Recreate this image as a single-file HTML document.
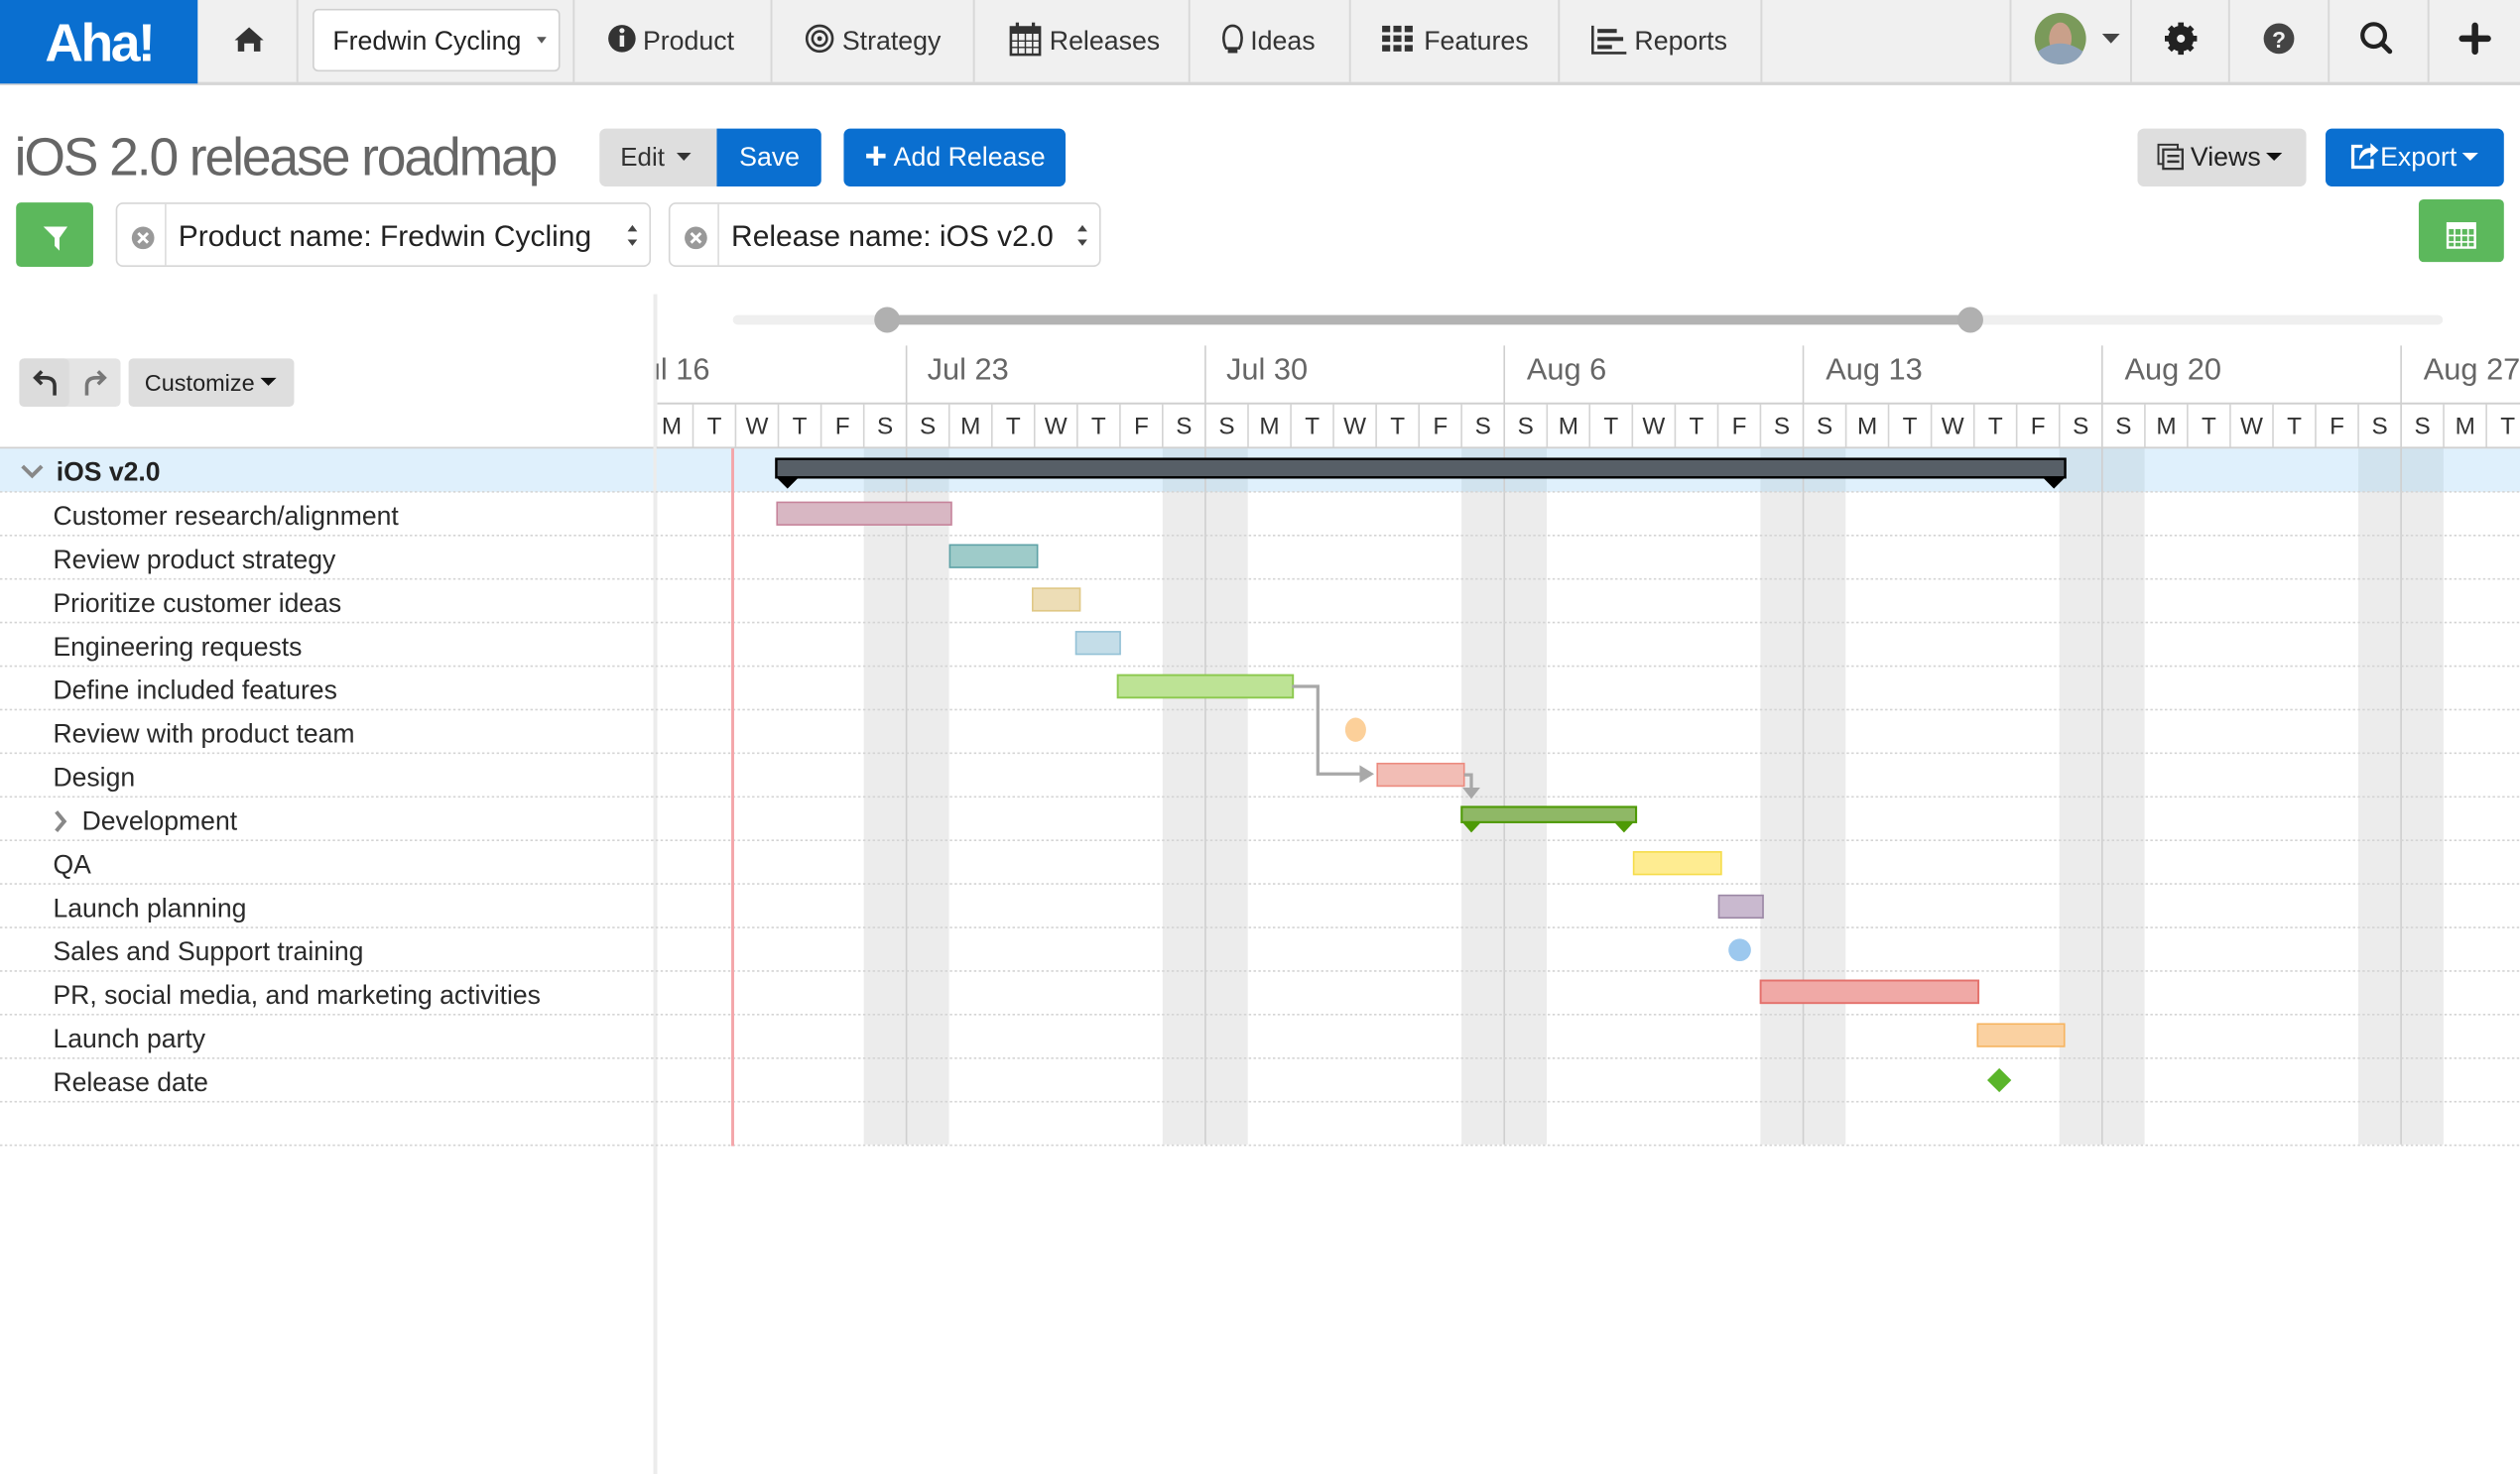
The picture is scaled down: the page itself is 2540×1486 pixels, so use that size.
<!DOCTYPE html>
<html><head><meta charset="utf-8"><style>
html,body{margin:0;padding:0;background:#fff;overflow:hidden}
svg{display:block}
text{font-family:"Liberation Sans",Arial,sans-serif}
</style></head><body>
<svg width="2540" height="1486" viewBox="0 0 1568 917" preserveAspectRatio="none" xmlns="http://www.w3.org/2000/svg">
<rect x="0" y="0" width="1568" height="52" fill="#f0f0f0"/>
<rect x="0" y="51" width="1568" height="2" fill="#d6d6d6"/>
<rect x="0" y="0" width="123" height="52" fill="#0a6fd0"/>
<text x="28" y="38" font-size="33" font-weight="bold" fill="#fff" letter-spacing="-1.5">Aha!</text>
<g stroke="#d8d8d8" stroke-width="1.2">
<line x1="185" y1="0" x2="185" y2="51"/><line x1="357" y1="0" x2="357" y2="51"/><line x1="480" y1="0" x2="480" y2="51"/><line x1="606" y1="0" x2="606" y2="51"/><line x1="740" y1="0" x2="740" y2="51"/><line x1="840" y1="0" x2="840" y2="51"/><line x1="970" y1="0" x2="970" y2="51"/><line x1="1096" y1="0" x2="1096" y2="51"/><line x1="1251" y1="0" x2="1251" y2="51"/><line x1="1326" y1="0" x2="1326" y2="51"/><line x1="1387" y1="0" x2="1387" y2="51"/><line x1="1449" y1="0" x2="1449" y2="51"/><line x1="1511" y1="0" x2="1511" y2="51"/>
</g>
<path d="M146 25 L155 17 L164 25 L162 25 L162 32 L158 32 L158 27 L152 27 L152 32 L148 32 L148 25 Z" fill="#333"/>
<rect x="195" y="6" width="153" height="38" rx="3" fill="#fff" stroke="#d0d0d0"/>
<text x="207" y="31" font-size="16.5" fill="#222">Fredwin Cycling</text>
<path d="M334 23 L340 23 L337 27 Z" fill="#555"/>
<circle cx="387" cy="24" r="8.5" fill="#333"/><rect x="385.6" y="22" width="2.8" height="7" fill="#f0f0f0"/><circle cx="387" cy="19" r="1.6" fill="#f0f0f0"/>
<text x="400" y="31" font-size="16.5" fill="#333">Product</text>
<circle cx="510" cy="24" r="8" fill="none" stroke="#333" stroke-width="1.6"/><circle cx="510" cy="24" r="4.5" fill="none" stroke="#333" stroke-width="1.6"/><circle cx="510" cy="24" r="1.5" fill="#333"/>
<text x="524" y="31" font-size="16.5" fill="#333">Strategy</text>
<rect x="629" y="17" width="18" height="17" fill="none" stroke="#333" stroke-width="1.6"/><rect x="629" y="17" width="18" height="4" fill="#333"/><path d="M629 25.5H647M629 29.5H647M633.5 21V34M638 21V34M642.5 21V34" stroke="#333" stroke-width="0.9"/><rect x="632" y="14" width="2" height="5" fill="#333"/><rect x="642" y="14" width="2" height="5" fill="#333"/>
<text x="653" y="31" font-size="16.5" fill="#333">Releases</text>
<path d="M763 30 C760 25 761 16 767 16 C773 16 774 25 771 30 Z" fill="none" stroke="#333" stroke-width="1.6"/><rect x="764" y="30" width="6" height="3" fill="#333"/>
<text x="778" y="31" font-size="16.5" fill="#333">Ideas</text>
<g fill="#333"><rect x="860" y="16" width="5" height="4"/><rect x="867" y="16" width="5" height="4"/><rect x="874" y="16" width="5" height="4"/><rect x="860" y="22" width="5" height="4"/><rect x="867" y="22" width="5" height="4"/><rect x="874" y="22" width="5" height="4"/><rect x="860" y="28" width="5" height="4"/><rect x="867" y="28" width="5" height="4"/><rect x="874" y="28" width="5" height="4"/></g>
<text x="886" y="31" font-size="16.5" fill="#333">Features</text>
<path d="M991 16V33H1012" fill="none" stroke="#333" stroke-width="1.6"/><rect x="994" y="18" width="12" height="2.5" fill="#333"/><rect x="994" y="23" width="16" height="2.5" fill="#333"/><rect x="994" y="28" width="9" height="2.5" fill="#333"/>
<text x="1017" y="31" font-size="16.5" fill="#333">Reports</text>
<circle cx="1282" cy="24" r="16" fill="#7a9a5a"/><ellipse cx="1282" cy="24" rx="7" ry="10" fill="#c9a08a"/><path d="M1268 32 Q1282 22 1296 32 Q1292 40 1282 40 Q1272 40 1268 32Z" fill="#8ea2b8"/>
<path d="M1308 21 L1319 21 L1313.5 27 Z" fill="#444"/>
<circle cx="1357" cy="24" r="6" fill="none" stroke="#222" stroke-width="4"/>
<g stroke="#222" stroke-width="3.5"><line x1="1357" y1="14" x2="1357" y2="34"/><line x1="1347" y1="24" x2="1367" y2="24"/><line x1="1350" y1="17" x2="1364" y2="31"/><line x1="1364" y1="17" x2="1350" y2="31"/></g><circle cx="1357" cy="24" r="2.5" fill="#f0f0f0"/>
<circle cx="1418" cy="24" r="9.5" fill="#444"/><text x="1418" y="29.5" font-size="14" font-weight="bold" fill="#f0f0f0" text-anchor="middle">?</text>
<circle cx="1477" cy="22" r="7" fill="none" stroke="#222" stroke-width="2.6"/><line x1="1482" y1="27" x2="1487" y2="32" stroke="#222" stroke-width="3" stroke-linecap="round"/>
<path d="M1540 16V32M1532 24H1548" stroke="#222" stroke-width="4" stroke-linecap="round"/>
<text x="9" y="109" font-size="33" fill="#666" letter-spacing="-1.3" style="font-weight:300">iOS 2.0 release roadmap</text>
<rect x="373" y="80" width="80" height="36" rx="4" fill="#dedede"/>
<text x="386" y="103" font-size="16" fill="#333">Edit</text><path d="M421 95 L430 95 L425.5 100Z" fill="#333"/>
<path d="M446 80 H507 a4 4 0 0 1 4 4 V112 a4 4 0 0 1 -4 4 H446Z" fill="#0a6fd0"/>
<text x="460" y="103" font-size="16.5" fill="#fff">Save</text>
<rect x="525" y="80" width="138" height="36" rx="4" fill="#0a6fd0"/>
<path d="M545 91V103M539 97H551" stroke="#fff" stroke-width="2.8"/>
<text x="556" y="103" font-size="16.5" fill="#fff">Add Release</text>
<rect x="1330" y="80" width="105" height="36" rx="4" fill="#dedede"/>
<rect x="1343" y="90" width="12" height="12" fill="none" stroke="#333" stroke-width="1.2"/><rect x="1346" y="93" width="12" height="12" fill="#dedede" stroke="#333" stroke-width="1.4"/><path d="M1348.5 97H1356M1348.5 100.5H1356" stroke="#333" stroke-width="1.5"/>
<text x="1363" y="103" font-size="16.5" fill="#222">Views</text><path d="M1410 95 L1420 95 L1415 100Z" fill="#111"/>
<rect x="1447" y="80" width="111" height="36" rx="4" fill="#0a6fd0"/>
<path d="M1470 91 H1464 V104 H1476 V99" fill="none" stroke="#fff" stroke-width="2"/><path d="M1468 100 Q1468 92 1475 92 V89 L1480 93.5 L1475 98 V95 Q1471 95 1468 100Z" fill="#fff"/>
<text x="1481" y="103" font-size="16.5" fill="#fff">Export</text><path d="M1532 95 L1542 95 L1537 100Z" fill="#fff"/>
<rect x="10" y="126" width="48" height="40" rx="3" fill="#5cb85c"/>
<path d="M27 141 H42 L37 148 V156 L34 153 V148 Z" fill="#fff"/>
<rect x="72.5" y="126.5" width="332" height="39" rx="4" fill="#fff" stroke="#d6d6d6"/>
<line x1="103" y1="127" x2="103" y2="165" stroke="#ddd"/>
<circle cx="89" cy="148" r="7" fill="#999"/><path d="M86 145L92 151M92 145L86 151" stroke="#fff" stroke-width="1.8"/>
<text x="111" y="153" font-size="18.5" fill="#222">Product name: Fredwin Cycling</text>
<path d="M390.5 144 L396.5 144 L393.5 140Z M390.5 149 L396.5 149 L393.5 153Z" fill="#444"/>
<rect x="416.5" y="126.5" width="268" height="39" rx="4" fill="#fff" stroke="#d6d6d6"/>
<line x1="447" y1="127" x2="447" y2="165" stroke="#ddd"/>
<circle cx="433" cy="148" r="7" fill="#999"/><path d="M430 145L436 151M436 145L430 151" stroke="#fff" stroke-width="1.8"/>
<text x="455" y="153" font-size="18.5" fill="#222">Release name: iOS v2.0</text>
<path d="M670.5 144 L676.5 144 L673.5 140Z M670.5 149 L676.5 149 L673.5 153Z" fill="#444"/>
<rect x="1505" y="124" width="53" height="39" rx="3" fill="#5cb85c"/>
<rect x="1523" y="139" width="17" height="15" fill="none" stroke="#fff" stroke-width="1.5"/><rect x="1523" y="139" width="17" height="3.5" fill="#fff"/><path d="M1523 146.5H1540M1523 150.5H1540M1527.3 142V154M1531.5 142V154M1535.7 142V154" stroke="#fff" stroke-width="1"/>
<rect x="407" y="183" width="2" height="734" fill="#eee"/>
<rect x="456" y="196" width="1064" height="6" rx="3" fill="#efefef"/>
<rect x="552" y="196" width="674" height="6" fill="#b3b3b3"/>
<circle cx="552" cy="199" r="8" fill="#b0b0b0"/><circle cx="1226" cy="199" r="8" fill="#b0b0b0"/>
<rect x="0" y="279" width="1568" height="27" fill="#dff0fc"/>
<g fill="#ececec">
<rect x="537.5" y="306" width="53" height="406"/><rect x="723.4" y="306" width="53" height="406"/><rect x="909.4" y="306" width="53" height="406"/><rect x="1095.4" y="306" width="53" height="406"/><rect x="1281.4" y="306" width="53" height="406"/><rect x="1467.4" y="306" width="53" height="406"/>
</g>
<g fill="#d1e3ee">
<rect x="537.5" y="279" width="53" height="27"/><rect x="723.4" y="279" width="53" height="27"/><rect x="909.4" y="279" width="53" height="27"/><rect x="1095.4" y="279" width="53" height="27"/><rect x="1281.4" y="279" width="53" height="27"/><rect x="1467.4" y="279" width="53" height="27"/>
</g>
<g stroke="#cfcfcf" stroke-width="1">
<line x1="564" y1="215" x2="564" y2="712"/><line x1="750" y1="215" x2="750" y2="712"/><line x1="936" y1="215" x2="936" y2="712"/><line x1="1122" y1="215" x2="1122" y2="712"/><line x1="1308" y1="215" x2="1308" y2="712"/><line x1="1494" y1="215" x2="1494" y2="712"/>
</g>
<g stroke="#d0d0d0" stroke-width="1.2">
<line x1="409" y1="251" x2="1568" y2="251"/>
<line x1="0" y1="278.5" x2="1568" y2="278.5"/>
</g>
<g stroke="#d4d4d4" stroke-width="1">
<path d="M431.2 251V278M457.7 251V278M484.3 251V278M510.9 251V278M537.5 251V278M590.6 251V278M617.2 251V278M643.7 251V278M670.3 251V278M696.9 251V278M723.4 251V278M776.6 251V278M803.2 251V278M829.7 251V278M856.3 251V278M882.9 251V278M909.4 251V278M962.6 251V278M989.1 251V278M1015.7 251V278M1042.3 251V278M1068.9 251V278M1095.4 251V278M1148.6 251V278M1175.1 251V278M1201.7 251V278M1228.3 251V278M1254.8 251V278M1281.4 251V278M1334.6 251V278M1361.1 251V278M1387.7 251V278M1414.3 251V278M1440.8 251V278M1467.4 251V278M1520.5 251V278M1547.1 251V278"/>
</g>
<g font-size="19" fill="#666" style="font-weight:300">
<text x="391" y="236">Jul 16</text><text x="577" y="236">Jul 23</text><text x="763" y="236">Jul 30</text><text x="950" y="236">Aug 6</text><text x="1136" y="236">Aug 13</text><text x="1322" y="236">Aug 20</text><text x="1508" y="236">Aug 27</text>
</g>
<rect x="0" y="183" width="407" height="95" fill="#fff"/>
<rect x="12" y="223" width="63" height="30" rx="3" fill="#e4e4e4"/><rect x="12" y="223" width="31" height="30" rx="3" fill="#dcdcdc"/>
<path d="M34 246 V240 Q34 235 28 235 H23 M26 231 L22 235 L26 239" fill="none" stroke="#333" stroke-width="2.2"/>
<path d="M54 246 V240 Q54 235 60 235 H64 M61 231 L65 235 L61 239" fill="none" stroke="#777" stroke-width="2.2"/>
<rect x="80" y="223" width="103" height="30" rx="3" fill="#dedede"/>
<text x="90" y="243" font-size="14.5" fill="#222">Customize</text><path d="M162 235 L172 235 L167 240Z" fill="#111"/>
<rect x="406.5" y="183" width="2" height="734" fill="#ececec"/>
<g font-size="15" fill="#333" text-anchor="middle">
<text x="417.9" y="270">M</text><text x="444.5" y="270">T</text><text x="471" y="270">W</text><text x="497.6" y="270">T</text><text x="524.2" y="270">F</text><text x="550.7" y="270">S</text><text x="577.3" y="270">S</text>
<text x="603.9" y="270">M</text><text x="630.5" y="270">T</text><text x="657" y="270">W</text><text x="683.6" y="270">T</text><text x="710.2" y="270">F</text><text x="736.7" y="270">S</text><text x="763.3" y="270">S</text>
<text x="789.9" y="270">M</text><text x="816.5" y="270">T</text><text x="843" y="270">W</text><text x="869.6" y="270">T</text><text x="896.2" y="270">F</text><text x="922.7" y="270">S</text><text x="949.3" y="270">S</text>
<text x="975.9" y="270">M</text><text x="1002.4" y="270">T</text><text x="1029" y="270">W</text><text x="1055.6" y="270">T</text><text x="1082.2" y="270">F</text><text x="1108.7" y="270">S</text><text x="1135.3" y="270">S</text>
<text x="1161.9" y="270">M</text><text x="1188.4" y="270">T</text><text x="1215" y="270">W</text><text x="1241.6" y="270">T</text><text x="1268.1" y="270">F</text><text x="1294.7" y="270">S</text><text x="1321.3" y="270">S</text>
<text x="1347.9" y="270">M</text><text x="1374.4" y="270">T</text><text x="1401" y="270">W</text><text x="1427.6" y="270">T</text><text x="1454.1" y="270">F</text><text x="1480.7" y="270">S</text><text x="1507.3" y="270">S</text>
<text x="1533.9" y="270">M</text><text x="1560.4" y="270">T</text>
</g>
<g stroke="#d4d4d4" stroke-width="1" stroke-dasharray="1.5 1.5">
<line x1="0" y1="306" x2="1568" y2="306"/><line x1="0" y1="333.1" x2="1568" y2="333.1"/><line x1="0" y1="360.2" x2="1568" y2="360.2"/><line x1="0" y1="387.3" x2="1568" y2="387.3"/><line x1="0" y1="414.4" x2="1568" y2="414.4"/><line x1="0" y1="441.5" x2="1568" y2="441.5"/><line x1="0" y1="468.6" x2="1568" y2="468.6"/><line x1="0" y1="495.7" x2="1568" y2="495.7"/><line x1="0" y1="522.8" x2="1568" y2="522.8"/><line x1="0" y1="549.9" x2="1568" y2="549.9"/><line x1="0" y1="577" x2="1568" y2="577"/><line x1="0" y1="604.1" x2="1568" y2="604.1"/><line x1="0" y1="631.2" x2="1568" y2="631.2"/><line x1="0" y1="658.3" x2="1568" y2="658.3"/><line x1="0" y1="685.4" x2="1568" y2="685.4"/><line x1="0" y1="712.5" x2="1568" y2="712.5"/>
</g>
<rect x="455" y="279" width="1.8" height="434" fill="#f4a6aa"/>
<path d="M14 290 L20 296 L26 290" fill="none" stroke="#888" stroke-width="2.4"/>
<text x="35" y="299" font-size="16.4" font-weight="bold" fill="#222">iOS v2.0</text>
<g font-size="16.4" fill="#2a2a2a">
<text x="33" y="326.5">Customer research/alignment</text>
<text x="33" y="353.6">Review product strategy</text>
<text x="33" y="380.7">Prioritize customer ideas</text>
<text x="33" y="407.8">Engineering requests</text>
<text x="33" y="434.9">Define included features</text>
<text x="33" y="462">Review with product team</text>
<text x="33" y="489.1">Design</text>
<text x="51" y="516.2">Development</text>
<text x="33" y="543.3">QA</text>
<text x="33" y="570.4">Launch planning</text>
<text x="33" y="597.5">Sales and Support training</text>
<text x="33" y="624.6">PR, social media, and marketing activities</text>
<text x="33" y="651.7">Launch party</text>
<text x="33" y="678.8">Release date</text>
</g>
<path d="M35 505 L40 511 L35 517" fill="none" stroke="#888" stroke-width="2.4"/>
<rect x="483" y="285.5" width="802" height="11.5" fill="#575f67" stroke="#000" stroke-width="1.5"/>
<path d="M483 297 L497 297 L490 304Z" fill="#000"/><path d="M1271 297 L1285 297 L1278 304Z" fill="#000"/>
<rect x="483.5" y="312.5" width="108.5" height="14" fill="#d8b7c3" stroke="#c6849b"/>
<rect x="591" y="339" width="54.5" height="14" fill="#9ecbc9" stroke="#5ea2a6"/>
<rect x="642.5" y="366" width="29.5" height="14" fill="#edddb6" stroke="#e0c886"/>
<rect x="669.5" y="393" width="27.5" height="14" fill="#c4dde8" stroke="#93c1d6"/>
<rect x="695.5" y="420" width="109" height="14" fill="#bde395" stroke="#8dc94f" stroke-width="1.2"/>
<path d="M804 427 H820 V481.5 H848" fill="none" stroke="#a8a8a8" stroke-width="2"/><path d="M846 476 L855 481.5 L846 487Z" fill="#a8a8a8"/>
<ellipse cx="843.5" cy="454" rx="6.5" ry="7.5" fill="#fcd09a"/>
<rect x="857" y="475" width="54" height="14" fill="#f2bdb5" stroke="#ec8b7f"/>
<path d="M911 482 H915.5 V491" fill="none" stroke="#a8a8a8" stroke-width="2"/><path d="M910 490 L921 490 L915.5 497Z" fill="#a8a8a8"/>
<rect x="909.5" y="502" width="108.5" height="9.5" fill="#8fb866" stroke="#4e9a06" stroke-width="1.3"/>
<path d="M909.5 511 L922 511 L915.5 518Z" fill="#4e9a06"/><path d="M1004 511 L1017 511 L1010.5 518Z" fill="#4e9a06"/>
<rect x="1016.5" y="530" width="54.5" height="14" fill="#feec91" stroke="#f6dc4a"/>
<rect x="1069.5" y="557" width="27.5" height="14" fill="#c9b9cf" stroke="#9b87a5"/>
<circle cx="1082.5" cy="591" r="7" fill="#9cc8ee"/>
<rect x="1095.5" y="610" width="135.5" height="14" fill="#f0a9a6" stroke="#e4716c" stroke-width="1.2"/>
<rect x="1230.5" y="637" width="54" height="14" fill="#fad1a1" stroke="#f6b460"/>
<path d="M1244 664.5 L1251.5 672 L1244 679.5 L1236.5 672Z" fill="#5ab52a"/>
</svg>
</body></html>
